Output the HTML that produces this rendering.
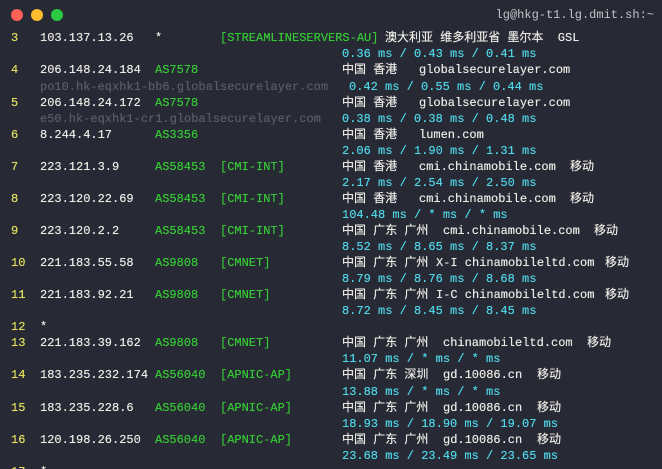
<!DOCTYPE html>
<html><head><meta charset="utf-8"><style>
html,body{margin:0;padding:0;background:#272934;width:662px;height:469px;overflow:hidden;}
body{position:relative;font-family:"Liberation Mono","Noto Sans CJK SC",monospace;font-size:12px;}
.r{position:absolute;white-space:pre;line-height:16px;height:16px;text-shadow:0 0 0.4px currentColor;}
.n{color:#e3e060;left:11px}
.ip{color:#ecebe6;left:40px}
.as{color:#35c935;left:155px}
.br{color:#35c935;left:220px}
.loc{color:#ecebe6;left:342px}
.ms{color:#4fd6e6;left:342px}
.g{color:#5a5c66;left:40px}
.dot{position:absolute;top:9px;width:12px;height:12px;border-radius:50%}
.t{position:absolute;top:7px;right:8px;color:#c2c2c6;white-space:pre;line-height:16px}
</style></head><body>
<div class="dot" style="left:11px;background:#fe5f57"></div>
<div class="dot" style="left:31px;background:#febc2e"></div>
<div class="dot" style="left:51px;background:#29c840"></div>
<div class="t">lg@hkg-t1.lg.dmit.sh:~</div>

<div class="r n" style="top:30px">3</div><div class="r ip" style="top:30px">103.137.13.26</div><div class="r ip" style="top:30px;left:155px">*</div><div class="r br" style="top:30px">[STREAMLINESERVERS-AU]</div><div class="r loc" style="top:30px;left:385px">澳大利亚 维多利亚省 墨尔本  GSL</div>
<div class="r ms" style="top:46px">0.36 ms / 0.43 ms / 0.41 ms</div>

<div class="r n" style="top:62px">4</div><div class="r ip" style="top:62px">206.148.24.184</div><div class="r as" style="top:62px">AS7578</div><div class="r loc" style="top:62px">中国 香港</div><div class="r loc" style="top:62px;left:419px">globalsecurelayer.com</div>
<div class="r g" style="top:79px">po10.hk-eqxhk1-bb6.globalsecurelayer.com</div><div class="r ms" style="top:79px;left:349px">0.42 ms / 0.55 ms / 0.44 ms</div>

<div class="r n" style="top:95px">5</div><div class="r ip" style="top:95px">206.148.24.172</div><div class="r as" style="top:95px">AS7578</div><div class="r loc" style="top:95px">中国 香港</div><div class="r loc" style="top:95px;left:419px">globalsecurelayer.com</div>
<div class="r g" style="top:111px">e50.hk-eqxhk1-cr1.globalsecurelayer.com</div><div class="r ms" style="top:111px">0.38 ms / 0.38 ms / 0.48 ms</div>

<div class="r n" style="top:127px">6</div><div class="r ip" style="top:127px">8.244.4.17</div><div class="r as" style="top:127px">AS3356</div><div class="r loc" style="top:127px">中国 香港</div><div class="r loc" style="top:127px;left:419px">lumen.com</div>
<div class="r ms" style="top:143px">2.06 ms / 1.90 ms / 1.31 ms</div>

<div class="r n" style="top:159px">7</div><div class="r ip" style="top:159px">223.121.3.9</div><div class="r as" style="top:159px">AS58453</div><div class="r br" style="top:159px">[CMI-INT]</div><div class="r loc" style="top:159px">中国 香港</div><div class="r loc" style="top:159px;left:419px">cmi.chinamobile.com</div><div class="r loc" style="top:159px;left:570px">移动</div>
<div class="r ms" style="top:175px">2.17 ms / 2.54 ms / 2.50 ms</div>

<div class="r n" style="top:191px">8</div><div class="r ip" style="top:191px">223.120.22.69</div><div class="r as" style="top:191px">AS58453</div><div class="r br" style="top:191px">[CMI-INT]</div><div class="r loc" style="top:191px">中国 香港</div><div class="r loc" style="top:191px;left:419px">cmi.chinamobile.com</div><div class="r loc" style="top:191px;left:570px">移动</div>
<div class="r ms" style="top:207px">104.48 ms / * ms / * ms</div>

<div class="r n" style="top:223px">9</div><div class="r ip" style="top:223px">223.120.2.2</div><div class="r as" style="top:223px">AS58453</div><div class="r br" style="top:223px">[CMI-INT]</div><div class="r loc" style="top:223px">中国 广东 广州</div><div class="r loc" style="top:223px;left:443px">cmi.chinamobile.com</div><div class="r loc" style="top:223px;left:594px">移动</div>
<div class="r ms" style="top:239px">8.52 ms / 8.65 ms / 8.37 ms</div>

<div class="r n" style="top:255px">10</div><div class="r ip" style="top:255px">221.183.55.58</div><div class="r as" style="top:255px">AS9808</div><div class="r br" style="top:255px">[CMNET]</div><div class="r loc" style="top:255px">中国 广东 广州</div><div class="r loc" style="top:255px;left:436px">X-I chinamobileltd.com</div><div class="r loc" style="top:255px;left:605px">移动</div>
<div class="r ms" style="top:271px">8.79 ms / 8.76 ms / 8.68 ms</div>

<div class="r n" style="top:287px">11</div><div class="r ip" style="top:287px">221.183.92.21</div><div class="r as" style="top:287px">AS9808</div><div class="r br" style="top:287px">[CMNET]</div><div class="r loc" style="top:287px">中国 广东 广州</div><div class="r loc" style="top:287px;left:436px">I-C chinamobileltd.com</div><div class="r loc" style="top:287px;left:605px">移动</div>
<div class="r ms" style="top:303px">8.72 ms / 8.45 ms / 8.45 ms</div>

<div class="r n" style="top:319px">12</div><div class="r ip" style="top:319px">*</div>

<div class="r n" style="top:335px">13</div><div class="r ip" style="top:335px">221.183.39.162</div><div class="r as" style="top:335px">AS9808</div><div class="r br" style="top:335px">[CMNET]</div><div class="r loc" style="top:335px">中国 广东 广州</div><div class="r loc" style="top:335px;left:443px">chinamobileltd.com</div><div class="r loc" style="top:335px;left:587px">移动</div>
<div class="r ms" style="top:351px">11.07 ms / * ms / * ms</div>

<div class="r n" style="top:367px">14</div><div class="r ip" style="top:367px">183.235.232.174</div><div class="r as" style="top:367px">AS56040</div><div class="r br" style="top:367px">[APNIC-AP]</div><div class="r loc" style="top:367px">中国 广东 深圳</div><div class="r loc" style="top:367px;left:443px">gd.10086.cn</div><div class="r loc" style="top:367px;left:537px">移动</div>
<div class="r ms" style="top:384px">13.88 ms / * ms / * ms</div>

<div class="r n" style="top:400px">15</div><div class="r ip" style="top:400px">183.235.228.6</div><div class="r as" style="top:400px">AS56040</div><div class="r br" style="top:400px">[APNIC-AP]</div><div class="r loc" style="top:400px">中国 广东 广州</div><div class="r loc" style="top:400px;left:443px">gd.10086.cn</div><div class="r loc" style="top:400px;left:537px">移动</div>
<div class="r ms" style="top:416px">18.93 ms / 18.90 ms / 19.07 ms</div>

<div class="r n" style="top:432px">16</div><div class="r ip" style="top:432px">120.198.26.250</div><div class="r as" style="top:432px">AS56040</div><div class="r br" style="top:432px">[APNIC-AP]</div><div class="r loc" style="top:432px">中国 广东 广州</div><div class="r loc" style="top:432px;left:443px">gd.10086.cn</div><div class="r loc" style="top:432px;left:537px">移动</div>
<div class="r ms" style="top:448px">23.68 ms / 23.49 ms / 23.65 ms</div>

<div class="r n" style="top:464px">17</div><div class="r ip" style="top:464px">*</div>
</body></html>
